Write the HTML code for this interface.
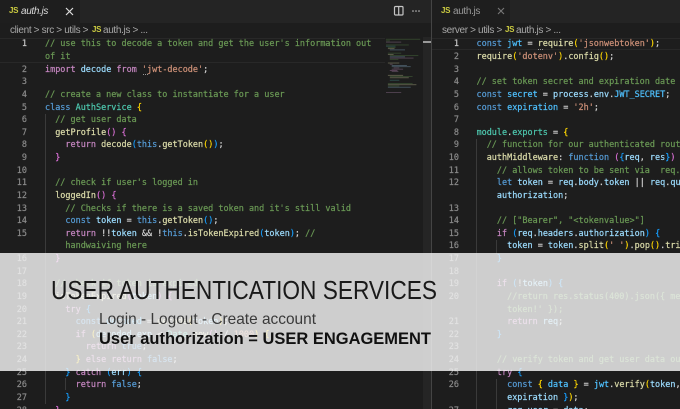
<!DOCTYPE html>
<html><head><meta charset="utf-8"><style>
html,body{margin:0;padding:0;background:#1d1d1d}
#r{position:relative;width:680px;height:409px;overflow:hidden;background:#1d1d1d;font-family:"DejaVu Sans Mono","Liberation Mono",monospace}
.a{position:absolute}
pre{position:absolute;margin:0;font:8.47px/12.63px "DejaVu Sans Mono","Liberation Mono",monospace;color:#d4d4d4;white-space:pre;filter:blur(.25px);-webkit-text-stroke:.2px}
.n{color:#8a8a8a;text-align:right;width:24px}
.c{color:#6a9955}.k{color:#c586c0}.b{color:#569cd6}.v{color:#9cdcfe}.f{color:#dcdcaa}.s{color:#ce9178}.t{color:#4ec9b0}.g{color:#ffd700}.p{color:#da70d6}.l{color:#179fff}.w{color:#c6c6c6}.e{color:#4fc1ff}
.u{font:10px/12px "Liberation Sans",sans-serif;letter-spacing:-.35px;color:#a8a8a8;white-space:pre;position:absolute;filter:blur(.2px)}
.js{font:bold 8px/8px "Liberation Sans",sans-serif;letter-spacing:-.3px;color:#cbcb41;position:absolute}
.i{position:absolute;width:1px;background:#3a3a3a}
</style></head><body><div id="r">
<div class="a" style="left:0;top:0;width:431px;height:23px;background:#242424"></div>
<div class="a" style="left:0;top:0;width:80px;height:23px;background:#1e1e1e"></div>
<div class="a" style="left:432px;top:0;width:248px;height:23px;background:#242424"></div>
<div class="a" style="left:432px;top:0;width:78px;height:23px;background:#1e1e1e"></div>
<div class="a" style="left:431px;top:0;width:1px;height:409px;background:#444"></div>

<div class="js" style="left:9px;top:7px">JS</div>
<div class="u" style="left:21px;top:6px;color:#d8d8d8;font-style:italic">auth.js</div>
<svg class="a" style="left:65px;top:7px" width="9" height="9"><path d="M1 1L8 8M8 1L1 8" stroke="#ddd" stroke-width="1.2" fill="none"/></svg>
<svg class="a" style="left:393px;top:5px" width="30" height="12"><rect x="1.5" y="1.5" width="8.5" height="8.5" rx="1" stroke="#c5c5c5" stroke-width="1.2" fill="none"/><path d="M5.7 1.5V10" stroke="#c5c5c5" stroke-width="1.2"/><circle cx="20" cy="6" r=".8" fill="#c5c5c5"/><circle cx="23" cy="6" r=".8" fill="#c5c5c5"/><circle cx="26" cy="6" r=".8" fill="#c5c5c5"/></svg>
<div class="js" style="left:441px;top:7px">JS</div>
<div class="u" style="left:453px;top:6px;color:#9a9a9a">auth.js</div>
<svg class="a" style="left:497px;top:7px" width="9" height="9"><path d="M1 1L7 7M7 1L1 7" stroke="#777" stroke-width="1.1" fill="none"/></svg>

<div class="u" style="left:10px;top:25px">client &gt; src &gt; utils &gt;</div>
<div class="js" style="left:92px;top:26px">JS</div>
<div class="u" style="left:103px;top:25px">auth.js &gt; ...</div>
<div class="u" style="left:442px;top:25px">server &gt; utils &gt;</div>
<div class="js" style="left:505px;top:26px">JS</div>
<div class="u" style="left:516px;top:25px">auth.js &gt; ...</div>

<div class="a" style="left:0;top:38px;width:385px;height:25px;border-top:1px solid #282828;border-bottom:1px solid #282828;box-sizing:border-box"></div>
<div class="a" style="left:432px;top:38px;width:248px;height:12px;border-top:1px solid #282828;border-bottom:1px solid #282828;box-sizing:border-box"></div>

<div class="i" style="left:45px;top:114px;height:290px"></div>
<div class="i" style="left:65px;top:378px;height:12px"></div>
<div class="i" style="left:476px;top:139px;height:270px"></div>
<div class="i" style="left:496px;top:240px;height:14px"></div>
<div class="i" style="left:496px;top:379px;height:30px"></div>

<svg class="a" style="left:386px;top:37px" width="46" height="372">
<rect x="37" y="0" width="8" height="372" fill="#252525"/><rect x="37" y="4" width="8" height="2" fill="#999"/>
<g opacity=".42" transform="translate(0 1) scale(.95 .82)">
<rect x="0" y="1" width="36" height="1" fill="#5a8a4a"/><rect x="0" y="3" width="4" height="1" fill="#5a8a4a"/><rect x="0" y="4.5" width="16" height="1" fill="#a880a8"/>
<rect x="0" y="8" width="24" height="1" fill="#5a8a4a"/><rect x="0" y="9.5" width="10" height="1" fill="#4a9a90"/><rect x="2" y="11" width="8" height="1" fill="#5a8a4a"/><rect x="2" y="12.5" width="7" height="1" fill="#cccc99"/><rect x="4" y="14" width="16" height="1" fill="#8ab0d0"/>
<rect x="2" y="18" width="14" height="1" fill="#5a8a4a"/><rect x="2" y="19.5" width="6" height="1" fill="#cccc99"/><rect x="4" y="21" width="30" height="1" fill="#5a8a4a"/><rect x="4" y="22.5" width="16" height="1" fill="#8ab0d0"/><rect x="4" y="24" width="25" height="1" fill="#a880a8"/><rect x="4" y="25.5" width="9" height="1" fill="#5a8a4a"/>
<rect x="2" y="30" width="12" height="1" fill="#cccc99"/><rect x="4" y="31.5" width="3" height="1" fill="#a880a8"/><rect x="6" y="33" width="16" height="1" fill="#8ab0d0"/><rect x="6" y="34.5" width="20" height="1" fill="#8ab0d0"/><rect x="8" y="36" width="6" height="1" fill="#a880a8"/><rect x="6" y="37.5" width="12" height="1" fill="#a880a8"/><rect x="4" y="39" width="8" height="1" fill="#c586c0"/><rect x="6" y="40.5" width="7" height="1" fill="#a880a8"/>
<rect x="2" y="45" width="16" height="1" fill="#cccc99"/><rect x="4" y="46.5" width="24" height="1" fill="#5a8a4a"/><rect x="4" y="48" width="20" height="1" fill="#cccc99"/><rect x="4" y="51" width="10" height="1" fill="#4a9a90"/>
<rect x="2" y="55" width="26" height="1" fill="#5a8a4a"/><rect x="2" y="56.5" width="30" height="1" fill="#cccc99"/><rect x="2" y="58" width="12" height="1" fill="#5a8a4a"/><rect x="2" y="59.5" width="24" height="1" fill="#8ab0d0"/><rect x="0" y="66" width="16" height="1" fill="#a880a8"/>
</g></svg>

<pre class="n" style="left:3px;top:37.4px"><span class="w">1</span>

2
3
4
5
6
7
8
9
10
11
12
13
14
15

16
17
18
19
20
21
22
23
24
25
26
27
28</pre>
<pre style="left:45px;top:37.4px;width:340px;overflow:hidden"><span class="c">// use this to decode a token and get the user's information out
of it</span>
<span class="k">import</span> <span class="v">decode</span> <span class="k">from</span> <span class="s">'jwt-decode'</span>;

<span class="c">// create a new class to instantiate for a user</span>
<span class="b">class</span> <span class="t">AuthService</span> <span class="g">{</span>
  <span class="c">// get user data</span>
  <span class="f">getProfile</span><span class="p">()</span> <span class="p">{</span>
    <span class="k">return</span> <span class="f">decode</span><span class="l">(</span><span class="b">this</span>.<span class="f">getToken</span><span class="g">()</span><span class="l">)</span>;
  <span class="p">}</span>

  <span class="c">// check if user's logged in</span>
  <span class="f">loggedIn</span><span class="p">()</span> <span class="p">{</span>
    <span class="c">// Checks if there is a saved token and it's still valid</span>
    <span class="b">const</span> <span class="v">token</span> = <span class="b">this</span>.<span class="f">getToken</span><span class="l">()</span>;
    <span class="k">return</span> !!<span class="v">token</span> &amp;&amp; !<span class="b">this</span>.<span class="f">isTokenExpired</span><span class="l">(</span><span class="v">token</span><span class="l">)</span>; <span class="c">//
    handwaiving here</span>
  <span class="p">}</span>

  <span class="c">// check if token is expired</span>
  <span class="f">isTokenExpired</span><span class="p">(</span><span class="v">token</span><span class="p">)</span> <span class="p">{</span>
    <span class="k">try</span> <span class="l">{</span>
      <span class="b">const</span> <span class="e">decoded</span> = <span class="f">decode</span><span class="g">(</span><span class="v">token</span><span class="g">)</span>;
      <span class="k">if</span> <span class="g">(</span><span class="v">decoded</span>.<span class="v">exp</span> &lt; <span class="t">Date</span>.<span class="f">now</span><span class="p">()</span> / <span class="s">1000</span><span class="g">)</span> <span class="g">{</span>
        <span class="k">return</span> <span class="b">true</span>;
      <span class="g">}</span> <span class="k">else</span> <span class="k">return</span> <span class="b">false</span>;
    <span class="l">}</span> <span class="k">catch</span> <span class="l">(</span><span class="v">err</span><span class="l">)</span> <span class="l">{</span>
      <span class="k">return</span> <span class="b">false</span>;
    <span class="l">}</span>
  <span class="p">}</span></pre>

<pre class="n" style="left:435px;top:37.4px"><span class="w">1</span>
2
3
4
5
6
7
8
9
10
11
12

13
14
15
16
17
18
19
20

21
22
23
24
25
26

27</pre>
<pre style="left:476.5px;top:37.4px;width:204px;overflow:hidden"><span class="b">const</span> <span class="e">jwt</span> = <span class="f">require</span><span class="g">(</span><span class="s">'jsonwebtoken'</span><span class="g">)</span>;
<span class="f">require</span><span class="g">(</span><span class="s">'dotenv'</span><span class="g">)</span>.<span class="f">config</span><span class="g">()</span>;

<span class="c">// set token secret and expiration date</span>
<span class="b">const</span> <span class="e">secret</span> = <span class="v">process</span>.<span class="v">env</span>.<span class="e">JWT_SECRET</span>;
<span class="b">const</span> <span class="e">expiration</span> = <span class="s">'2h'</span>;

<span class="t">module</span>.<span class="t">exports</span> = <span class="g">{</span>
  <span class="c">// function for our authenticated routes</span>
  <span class="f">authMiddleware</span>: <span class="b">function</span> <span class="p">(</span><span class="l">{</span><span class="v">req</span>, <span class="v">res</span><span class="l">}</span><span class="p">)</span> <span class="p">{</span>
    <span class="c">// allows token to be sent via  req.query or headers</span>
    <span class="b">let</span> <span class="v">token</span> = <span class="v">req</span>.<span class="v">body</span>.<span class="v">token</span> || <span class="v">req</span>.<span class="v">query</span>.<span class="v">token</span>
    <span class="v">authorization</span>;

    <span class="c">// ["Bearer", "&lt;tokenvalue&gt;"]</span>
    <span class="k">if</span> <span class="l">(</span><span class="v">req</span>.<span class="v">headers</span>.<span class="v">authorization</span><span class="l">)</span> <span class="l">{</span>
      <span class="v">token</span> = <span class="v">token</span>.<span class="f">split</span><span class="g">(</span><span class="s">' '</span><span class="g">)</span>.<span class="f">pop</span><span class="g">()</span>.<span class="f">trim</span><span class="g">()</span>;
    <span class="l">}</span>

    <span class="k">if</span> <span class="l">(</span>!<span class="v">token</span><span class="l">)</span> <span class="l">{</span>
      <span class="c">//return res.status(400).json({ message: 'You
      token!' });</span>
      <span class="k">return</span> <span class="v">req</span>;
    <span class="l">}</span>

    <span class="c">// verify token and get user data out of it</span>
    <span class="k">try</span> <span class="l">{</span>
      <span class="b">const</span> <span class="g">{</span> <span class="e">data</span> <span class="g">}</span> = <span class="e">jwt</span>.<span class="f">verify</span><span class="g">(</span><span class="v">token</span>, <span class="v">secret</span>,
      <span class="v">expiration</span> <span class="l">}</span><span class="g">)</span>;
      <span class="v">req</span>.<span class="v">user</span> = <span class="v">data</span>;</pre>

<svg class="a" style="left:538px;top:49px" width="6" height="1"><rect x="0" y="0" width="1" height="1" fill="#999"/><rect x="2" y="0" width="1" height="1" fill="#999"/><rect x="4" y="0" width="1" height="1" fill="#999"/></svg>
<svg class="a" style="left:143px;top:74px" width="6" height="1"><rect x="0" y="0" width="1" height="1" fill="#999"/><rect x="2" y="0" width="1" height="1" fill="#999"/><rect x="4" y="0" width="1" height="1" fill="#999"/></svg>

<div class="a" style="left:0;top:253px;width:680px;height:118px;background:rgba(245,245,245,.82)"></div>
<svg class="a" style="left:0;top:0" width="680" height="409">
<text x="51" y="299" font-family="Liberation Sans,sans-serif" font-size="25.5" fill="#1a1a1a" textLength="386" lengthAdjust="spacingAndGlyphs">USER AUTHENTICATION SERVICES</text>
<text x="99" y="324" font-family="Liberation Sans,sans-serif" font-size="16" fill="#3a3a3a" textLength="217" lengthAdjust="spacingAndGlyphs">Login - Logout - Create account</text>
<text x="99" y="344" font-family="Liberation Sans,sans-serif" font-size="16.5" font-weight="700" fill="#111" textLength="332" lengthAdjust="spacingAndGlyphs">User authorization = USER ENGAGEMENT</text>
</svg>
</div></body></html>
